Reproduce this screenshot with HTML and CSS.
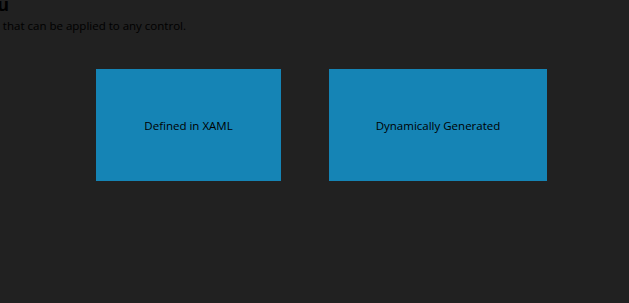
FILE: index.html
```html
<!DOCTYPE html>
<html lang="en">
<head>
    <meta charset="UTF-8">
    <title>Context Menu</title>
    <link rel="stylesheet" href="styles.css">
</head>
<body>
    <div class="header">
        <div class="title">Context Menu</div>
        <div class="desc">Shows a context menu that can be applied to any control.</div>
    </div>

    <div class="samples">
        <div class="tile tile-xaml">Defined in XAML</div>
        <div class="tile tile-dynamic">Dynamically Generated</div>
    </div>
</body>
</html>
```

FILE: styles.css
```css
body {
    margin: 0;
    height: 303px;
    overflow: hidden;
    background-color: #212121;
    font-family: "Open Sans", "Noto Sans", sans-serif;
    color: #000;
}
.header {
    display: flex;
    flex-direction: column;
    align-items: flex-end;
    width: 186px;
    overflow: hidden;
    white-space: nowrap;
}
.title {
    align-self: flex-start;
    margin-left: -118px;
    margin-top: -7px;
    font-size: 18px;
    font-weight: bold;
    line-height: 22px;
}
.desc {
    font-size: 11.5px;
    line-height: 16px;
    margin-top: 3px;
}
.samples {
    display: flex;
    gap: 48px;
    padding-left: 96px;
    margin-top: 35px;
}
.tile {
    display: flex;
    justify-content: center;
    align-items: center;
    height: 112px;
    background-color: #1584b5;
    font-size: 11.5px;
}
.tile-xaml {
    width: 185px;
}
.tile-dynamic {
    width: 218px;
}
```
